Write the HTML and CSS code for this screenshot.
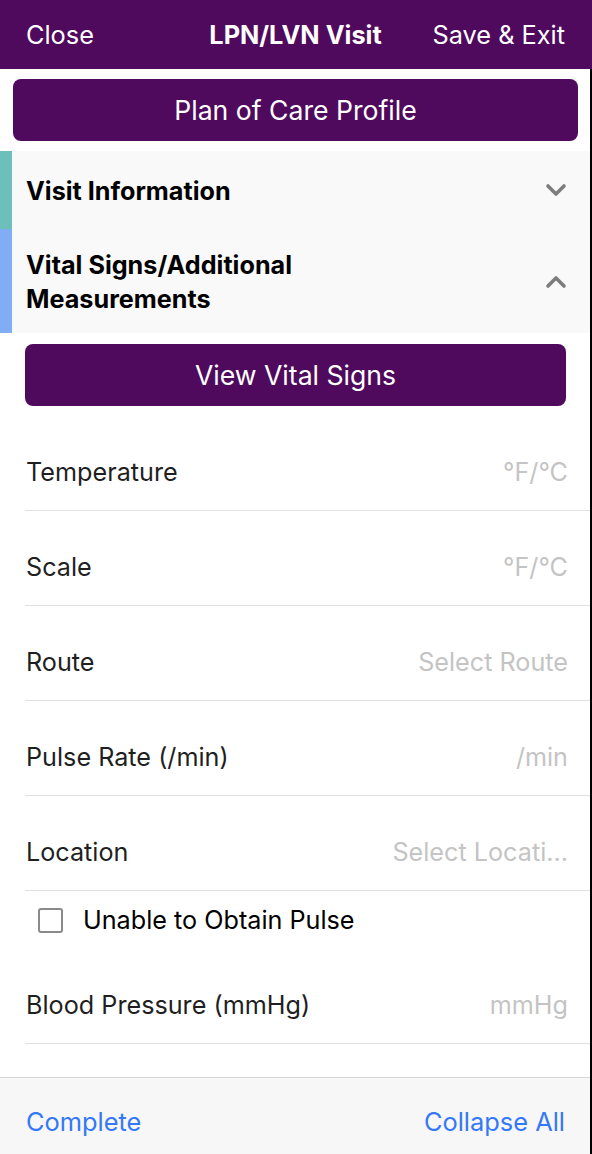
FILE: index.html
```html
<!DOCTYPE html>
<html>
<head>
<meta charset="utf-8">
<link rel="stylesheet" href="styles.css">
</head>
<body>
<div class="app">
  <header class="topbar">
    <span class="tb-left">Close</span>
    <span class="tb-title">LPN/LVN Visit</span>
    <span class="tb-right">Save &amp; Exit</span>
  </header>
  <div class="main">
    <div class="scroll">
      <div class="btn btn-plan">Plan of Care Profile</div>
      <div class="section sec-visit">
        <div class="sec-bar"></div>
        <div class="sec-head">
          <span class="sec-title">Visit Information</span>
          <svg class="chev" width="22" height="14" viewBox="0 0 22 14"><polyline points="3,3 11,11 19,3" fill="none" stroke="#7d7d7d" stroke-width="3.6" stroke-linecap="round" stroke-linejoin="round"/></svg>
        </div>
      </div>
      <div class="section sec-vital">
        <div class="sec-bar"></div>
        <div class="sec-head">
          <span class="sec-title">Vital Signs/Additional<br>Measurements</span>
          <svg class="chev" width="22" height="14" viewBox="0 0 22 14"><polyline points="3,11 11,3 19,11" fill="none" stroke="#7d7d7d" stroke-width="3.6" stroke-linecap="round" stroke-linejoin="round"/></svg>
        </div>
      </div>
      <div class="btn btn-vital">View Vital Signs</div>
      <div class="fields">
        <div class="row"><span class="lbl">Temperature</span><span class="ph">°F/°C</span></div>
        <div class="row"><span class="lbl">Scale</span><span class="ph">°F/°C</span></div>
        <div class="row"><span class="lbl">Route</span><span class="ph">Select Route</span></div>
        <div class="row"><span class="lbl">Pulse Rate (/min)</span><span class="ph">/min</span></div>
        <div class="row"><span class="lbl">Location</span><span class="ph">Select Locati...</span></div>
        <div class="check-row"><span class="box"></span><span class="check-lbl">Unable to Obtain Pulse</span></div>
        <div class="row"><span class="lbl">Blood Pressure (mmHg)</span><span class="ph">mmHg</span></div>
      </div>
    </div>
    <footer class="bottombar">
      <span class="link">Complete</span>
      <span class="link">Collapse All</span>
    </footer>
  </div>
</div>
</body>
</html>
```

FILE: styles.css
```css
* { box-sizing: border-box; }
html, body { margin: 0; padding: 0; }
body {
  width: 592px;
  height: 1154px;
  overflow: hidden;
  font-family: Inter, "Liberation Sans", sans-serif;
  background: #fff;
}
.app {
  display: flex;
  flex-direction: column;
  height: 1154px;
}
.topbar {
  height: 69px;
  flex: none;
  background: #4f0a5d;
  color: #fff;
  display: grid;
  grid-template-columns: 1fr auto 1fr;
  align-items: center;
  padding: 0 27px 0 26px;
  font-size: 25.3px;
}
.tb-left { justify-self: start; }
.tb-title { font-weight: 700; }
.tb-right { justify-self: end; }
.main {
  flex: 1;
  display: flex;
  flex-direction: column;
  border-right: 2px solid #000;
  min-height: 0;
}
.scroll {
  flex: 1;
  overflow: hidden;
}
.btn {
  background: #4f0a5d;
  color: #fff;
  border-radius: 8px;
  height: 62px;
  display: flex;
  align-items: center;
  justify-content: center;
  font-size: 26.6px;
}
.btn-plan { margin: 10px 12px 10px 13px; }
.btn-vital { margin: 11px 24px 10px 25px; }
.section {
  display: flex;
  background: #f9f9f9;
}
.sec-bar { width: 12px; flex: none; }
.sec-visit .sec-bar { background: #6dbfbb; }
.sec-vital .sec-bar { background: #80adf4; }
.sec-visit { height: 78px; }
.sec-vital { height: 104px; }
.sec-head {
  flex: 1;
  display: flex;
  align-items: center;
  justify-content: space-between;
  padding: 1px 23px 0 14px;
}
.sec-vital .sec-head { padding-top: 2px; }
.chev { margin-top: -1px; }
.sec-title {
  font-weight: 700;
  font-size: 25.2px;
  line-height: 34px;
  color: #000;
}
.row {
  margin-left: 25px;
  border-bottom: 1px solid #e0e0e0;
  height: 95px;
  display: flex;
  align-items: center;
  justify-content: space-between;
  padding: 18px 22px 0 1px;
  font-size: 25.2px;
}
.lbl { color: #1f1f1f; }
.ph { color: #c4c4c4; }
.check-row {
  height: 58px;
  display: flex;
  align-items: center;
  padding-left: 38px;
  font-size: 25.2px;
}
.box {
  width: 25px;
  height: 25px;
  border: 2.5px solid #8a8a8a;
  border-radius: 3px;
  flex: none;
}
.check-lbl { margin-left: 20px; color: #000; }
.bottombar {
  height: 77px;
  flex: none;
  background: #f7f7f7;
  border-top: 1px solid #d6d6d6;
  display: flex;
  align-items: center;
  justify-content: space-between;
  padding: 10px 25px 0 26px;
  font-size: 25.4px;
}
.link { color: #3478f6; }
```
